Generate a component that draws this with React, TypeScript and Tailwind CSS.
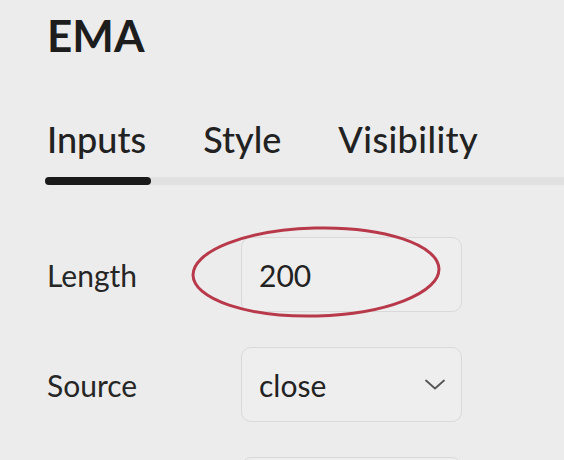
const tabs = ["Inputs", "Style", "Visibility"];

function Field({ label, value, select }: { label?: string; value?: string; select?: boolean }) {
  return (
    <div className="flex items-center">
      <div className="w-[194px] text-[30px] leading-none text-[#262626]">{label}</div>
      <div className="flex h-[75px] w-[221px] items-center justify-between rounded-[10px] border border-[#d9d9d9] bg-[#eeeeee] pl-[17px] pr-[16px]">
        <span className="text-[30px] leading-none text-[#222]">{value}</span>
        {select && (
          <svg width="20" height="11" viewBox="0 0 20 11" fill="none">
            <path d="M1 1.5 L10 9.5 L19 1.5" stroke="#555" strokeWidth="1.8" strokeLinecap="round" strokeLinejoin="round" />
          </svg>
        )}
      </div>
    </div>
  );
}

export default function App() {
  return (
    <div className="relative h-[460px] w-[564px] overflow-hidden bg-[#ececec] pl-[47px] font-['Lato',sans-serif]">
      <h1 className="pt-[13px] text-[44px] font-bold leading-[44px] text-[#1d1d1d]">EMA</h1>

      <div className="mt-[64px] flex gap-[57px] text-[36px] font-medium leading-[36px] text-[#222]">
        {tabs.map((t) => (
          <span key={t} className={t === "Visibility" ? "tracking-[0.4px]" : ""}>
            {t}
          </span>
        ))}
      </div>
      <div className="-ml-[2px] mt-[20px] h-[8px] bg-[#e1e1e1]">
        <div className="h-full w-[106px] rounded-full bg-[#1a1a1a]" />
      </div>

      <div className="mt-[52px] flex flex-col gap-[35px]">
        <Field label="Length" value="200" />
        <Field label="Source" value="close" select />
        <Field />
      </div>

      {/* red annotation circle */}
      <svg className="absolute left-[189px] top-[224px]" width="255" height="97" viewBox="0 0 255 97">
        <ellipse cx="127" cy="48" rx="123" ry="44" fill="none" stroke="#b8394a" strokeWidth="3" transform="rotate(-1.5 127 48)" />
      </svg>
    </div>
  );
}
